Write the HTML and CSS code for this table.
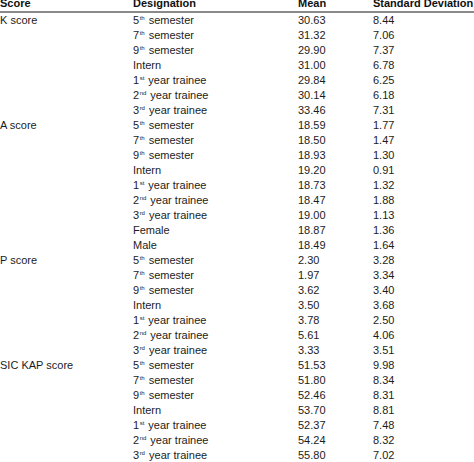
FILE: index.html
```html
<!DOCTYPE html>
<html>
<head>
<meta charset="utf-8">
<link rel="stylesheet" href="styles.css">
</head>
<body>
<table class="tbl">
<colgroup><col class="c1"><col class="c2"><col class="c3"><col class="c4"></colgroup>
<thead>
<tr><th>Score</th><th>Designation</th><th>Mean</th><th>Standard Deviation</th></tr>
</thead>
<tbody>
<tr><td>K score</td><td>5<sup>th</sup> semester</td><td>30.63</td><td>8.44</td></tr>
<tr><td></td><td>7<sup>th</sup> semester</td><td>31.32</td><td>7.06</td></tr>
<tr><td></td><td>9<sup>th</sup> semester</td><td>29.90</td><td>7.37</td></tr>
<tr><td></td><td>Intern</td><td>31.00</td><td>6.78</td></tr>
<tr><td></td><td>1<sup>st</sup> year trainee</td><td>29.84</td><td>6.25</td></tr>
<tr><td></td><td>2<sup>nd</sup> year trainee</td><td>30.14</td><td>6.18</td></tr>
<tr><td></td><td>3<sup>rd</sup> year trainee</td><td>33.46</td><td>7.31</td></tr>
<tr><td>A score</td><td>5<sup>th</sup> semester</td><td>18.59</td><td>1.77</td></tr>
<tr><td></td><td>7<sup>th</sup> semester</td><td>18.50</td><td>1.47</td></tr>
<tr><td></td><td>9<sup>th</sup> semester</td><td>18.93</td><td>1.30</td></tr>
<tr><td></td><td>Intern</td><td>19.20</td><td>0.91</td></tr>
<tr><td></td><td>1<sup>st</sup> year trainee</td><td>18.73</td><td>1.32</td></tr>
<tr><td></td><td>2<sup>nd</sup> year trainee</td><td>18.47</td><td>1.88</td></tr>
<tr><td></td><td>3<sup>rd</sup> year trainee</td><td>19.00</td><td>1.13</td></tr>
<tr><td></td><td>Female</td><td>18.87</td><td>1.36</td></tr>
<tr><td></td><td>Male</td><td>18.49</td><td>1.64</td></tr>
<tr><td>P score</td><td>5<sup>th</sup> semester</td><td>2.30</td><td>3.28</td></tr>
<tr><td></td><td>7<sup>th</sup> semester</td><td>1.97</td><td>3.34</td></tr>
<tr><td></td><td>9<sup>th</sup> semester</td><td>3.62</td><td>3.40</td></tr>
<tr><td></td><td>Intern</td><td>3.50</td><td>3.68</td></tr>
<tr><td></td><td>1<sup>st</sup> year trainee</td><td>3.78</td><td>2.50</td></tr>
<tr><td></td><td>2<sup>nd</sup> year trainee</td><td>5.61</td><td>4.06</td></tr>
<tr><td></td><td>3<sup>rd</sup> year trainee</td><td>3.33</td><td>3.51</td></tr>
<tr><td>SIC KAP score</td><td>5<sup>th</sup> semester</td><td>51.53</td><td>9.98</td></tr>
<tr><td></td><td>7<sup>th</sup> semester</td><td>51.80</td><td>8.34</td></tr>
<tr><td></td><td>9<sup>th</sup> semester</td><td>52.46</td><td>8.31</td></tr>
<tr><td></td><td>Intern</td><td>53.70</td><td>8.81</td></tr>
<tr><td></td><td>1<sup>st</sup> year trainee</td><td>52.37</td><td>7.48</td></tr>
<tr><td></td><td>2<sup>nd</sup> year trainee</td><td>54.24</td><td>8.32</td></tr>
<tr><td></td><td>3<sup>rd</sup> year trainee</td><td>55.80</td><td>7.02</td></tr>
</tbody>
</table>
</body>
</html>
```
FILE: styles.css
```css
html, body {
  margin: 0;
  padding: 0;
  background: #fff;
  overflow: hidden;
}
body {
  font-family: "Liberation Sans", Arial, sans-serif;
  font-size: 11px;
  color: #1c1c1c;
}
.tbl {
  border-collapse: collapse;
  table-layout: fixed;
  width: 520px;
  margin-top: -4px;
}
.c1 { width: 133px; }
.c2 { width: 165px; }
.c3 { width: 75px; }
.c4 { width: 147px; }
.tbl th, .tbl td {
  padding: 0;
  line-height: 15px;
  height: 15px;
  text-align: left;
  white-space: nowrap;
  vertical-align: top;
}
.tbl th {
  font-weight: bold;
  color: #111;
  border-bottom: 2px solid #8a8a8a;
}
.tbl tbody tr:first-child td {
  padding-top: 0;
}
.tbl sup {
  font-size: 6px;
  line-height: 0;
  vertical-align: 4px;
  margin-left: 0.5px;
  margin-right: 1px;
}
```
